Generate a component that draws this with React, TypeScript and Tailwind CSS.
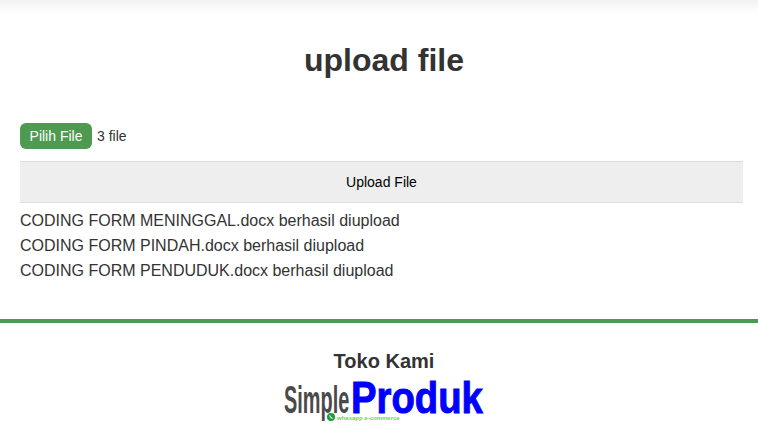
const App = () => {
  const results = [
    "CODING FORM MENINGGAL.docx berhasil diupload",
    "CODING FORM PINDAH.docx berhasil diupload",
    "CODING FORM PENDUDUK.docx berhasil diupload",
  ];

  return (
    <div className="h-[426px] w-[758px] overflow-hidden bg-white font-['Liberation_Sans',Arial,sans-serif] text-[#333]">
      <div className="h-[14px] bg-gradient-to-b from-[#f3f3f3] to-white" />

      <main className="px-5">
        <h1 className="mt-[26px] pl-[10px] text-center text-[32px] leading-[40px] font-bold">upload file</h1>

        <div className="mt-[43px] flex items-center">
          <button className="h-[26px] w-[72px] rounded-[6px] bg-[#4e9a51] text-[14px] text-white">Pilih File</button>
          <span className="ml-[5px] text-[14px]">3 file</span>
        </div>

        <button className="mt-3 block h-[42px] w-[723px] border-y border-[#ddd] bg-[#eee] text-[14px] text-black">
          Upload File
        </button>

        <div className="mt-[5px]">
          {results.map((item) => (
            <p key={item} className="text-[16px] leading-[25px]">
              {item}
            </p>
          ))}
        </div>
      </main>

      <footer className="mt-[36px] flex flex-col items-center border-t-4 border-[#4e9a51] pl-[10px]">
        <h2 className="mt-[26px] text-[20px] leading-[24px] font-bold">Toko Kami</h2>
        <div className="relative flex h-[47px] w-[200px] items-end leading-none">
          <span className="mb-[1px] w-[67px] origin-left scale-x-[0.51] text-[39px] font-bold whitespace-nowrap text-[#4a4a4a]">Simple</span>
          <span className="mb-0 origin-left scale-x-[0.85] text-[45px] font-bold whitespace-nowrap text-[#0000ff] [-webkit-text-stroke:1px_#0000ff]">Produk</span>
          <span className="absolute top-[41px] left-[53px] text-[6px] leading-[8px] font-bold text-[#5fdc4a]">
            whasapp e-commerce
          </span>
          <svg viewBox="0 0 10 10" className="absolute top-[40px] left-[43px] h-2 w-2">
            <circle cx="5" cy="5" r="5" fill="#1f9d3a" />
            <path d="M3.2 3c.8 2 1.800 3 3.800 3.800" stroke="#fff" strokeWidth="1.300" fill="none" />
          </svg>
        </div>
      </footer>
    </div>
  );
};

export default App;
